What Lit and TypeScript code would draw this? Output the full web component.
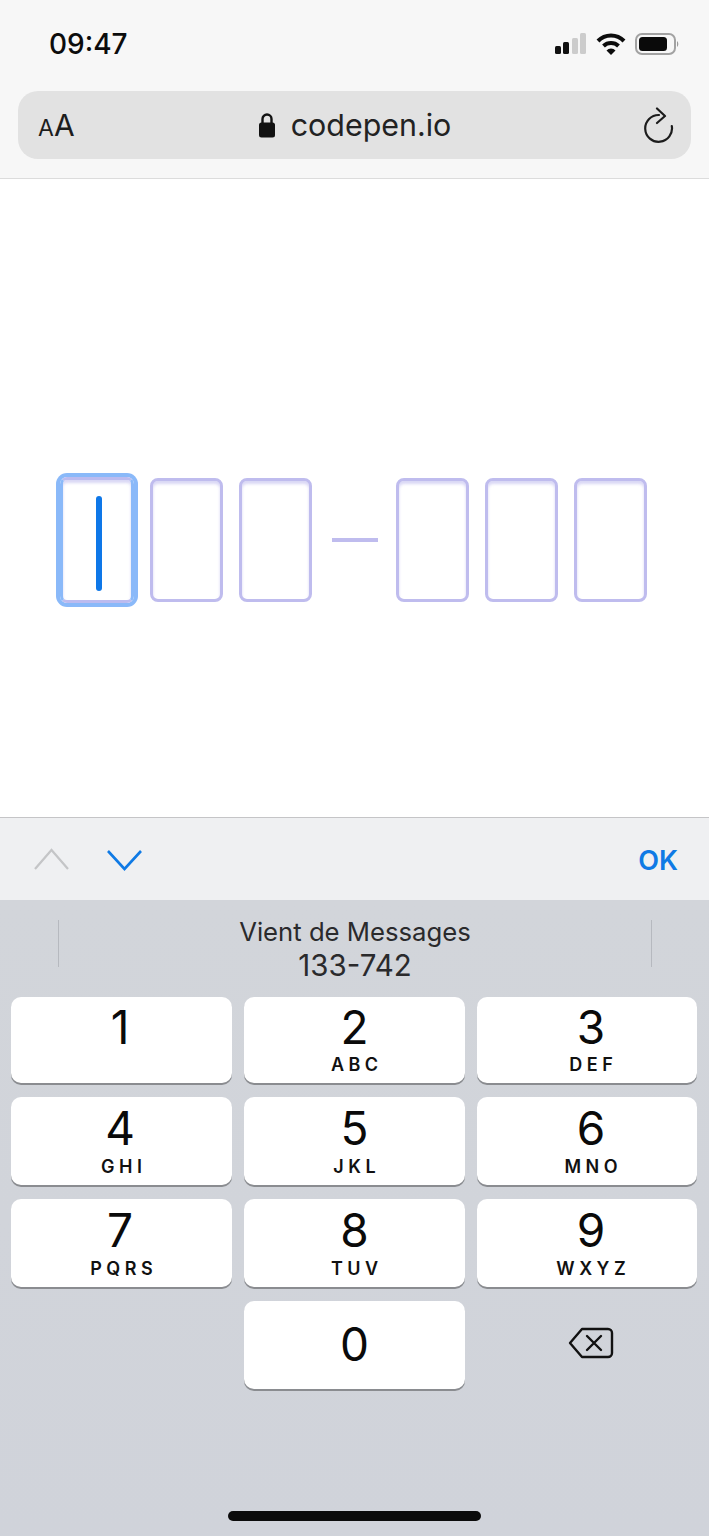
import { LitElement, html, css } from "lit";
import { customElement } from "lit/decorators.js";

const KEYS: [string, string][][] = [
  [["1", ""], ["2", "ABC"], ["3", "DEF"]],
  [["4", "GHI"], ["5", "JKL"], ["6", "MNO"]],
  [["7", "PQRS"], ["8", "TUV"], ["9", "WXYZ"]],
];

@customElement("app-root")
export class AppRoot extends LitElement {
  static styles = css`
    :host { display: block; width: 709px; height: 1536px; overflow: hidden; font-family: Inter, "Liberation Sans", sans-serif; color: #111; background: #fff; }
    .screen { display: flex; flex-direction: column; height: 1536px; }
    .chrome { height: 178px; flex: none; background: #f7f7f7; border-bottom: 1px solid #dcdcdc; padding: 0 18px; display: flex; flex-direction: column; }
    .status { height: 91px; display: flex; align-items: center; justify-content: space-between; padding: 0 11px 4px 31px; box-sizing: border-box; }
    .time { font-size: 28px; font-weight: 550; color: #0c0c0c; }
    .status-icons { display: flex; align-items: center; gap: 9px; }
    .url { height: 68px; background: #e2e2e2; border-radius: 20px; display: grid; grid-template-columns: 1fr auto 1fr; align-items: center; padding: 0 17px 0 20px; }
    .aa { font-size: 30px; color: #1d1d1d; line-height: 1; display: flex; align-items: baseline; }
    .aa small { font-size: 23px; }
    .site { display: flex; align-items: center; gap: 15px; font-size: 30.4px; color: #222; margin-left: -3px; }
    .reload { justify-self: end; display: flex; }
    .page { flex: 1; display: flex; align-items: center; padding: 84px 0 0 60px; background: #fff; box-sizing: border-box; }
    .otp { display: flex; align-items: center; }
    .box { flex: none; width: 73px; height: 124px; box-sizing: border-box; border: 3px solid #bfbcee; border-radius: 8px; margin-right: 16px; box-shadow: inset 0 3px 3px rgba(192, 189, 238, 0.6); }
    .box.focus { width: 74px; height: 126px; border-color: #bcbbef #8ab9f9; border-radius: 7px; display: flex; align-items: center; justify-content: center; padding: 6px 0 0 4px; box-shadow: 0 0 0 4px #8ab9f9, inset 0 3px 3px rgba(192, 189, 238, 0.6); }
    .caret { width: 6px; height: 95px; border-radius: 3px; background: #0e77e8; }
    .dash { width: 46px; height: 4px; background: #bfbcee; margin: 0 18px 0 4px; }
    .toolbar { height: 82px; flex: none; border-top: 1px solid #c5c5c7; background: #eff0f2; display: flex; align-items: center; padding: 0 31px 0 33px; gap: 36px; }
    .ok { margin-left: auto; padding-top: 2px; font-size: 27px; font-weight: 600; color: #0f7ae5; }
    .kbd { height: 636px; flex: none; box-sizing: border-box; background: linear-gradient(#d2d5da, #d0d3da); padding: 0 12px 0 11px; display: flex; flex-direction: column; position: relative; }
    .suggest { height: 97px; flex: none; display: flex; align-items: center; margin: 0 45px 0 47px; }
    .sep { width: 1px; height: 47px; background: #b6b9bf; margin-top: -10px; }
    .msg { flex: 1; text-align: center; font-size: 25.7px; line-height: 33px; color: #2a2a2c; }
    .msg .code { font-size: 29.500px; display: block; line-height: 34px; }
    .rows { display: flex; flex-direction: column; gap: 14px; }
    .row { display: grid; grid-template-columns: 221px 221px 220px; column-gap: 12px; }
    .key { height: 88px; box-sizing: border-box; background: #fff; border-radius: 10px; box-shadow: 0 2px 0 #8a8c90; display: flex; flex-direction: column; align-items: center; }
    .row.first .key { height: 86px; }
    .row.first .num { margin-top: 3px; }
    .row.first .let { margin-top: 1px; }
    .key.left .num { margin-right: 3px; }
    .key.right { padding-left: 8px; }
    .num { font-size: 46px; line-height: 54px; margin-top: 4px; color: #0a0a0a; }
    .num.zero { margin-top: 16px; }
    .let { font-size: 18px; line-height: 20px; font-weight: 600; letter-spacing: 4.5px; margin-right: -4.5px; margin-top: 2px; color: #111; }
    .blank { height: 88px; }
    .back { display: flex; align-items: center; justify-content: center; height: 84px; padding-left: 8px; }
    .home { position: absolute; left: 228px; bottom: 15px; width: 253px; height: 10px; border-radius: 5px; background: #0b0b0b; }
  `;

  private icons() {
    return html`
      <svg width="33" height="21" viewBox="0 0 33 21">
        <rect x="1" y="13" width="6" height="8" rx="1.5" fill="#111"/>
        <rect x="9" y="9" width="6" height="12" rx="1.5" fill="#111"/>
        <rect x="18" y="5" width="6" height="16" rx="1.500" fill="#ccc"/>
        <rect x="26" y="0" width="6" height="21" rx="1.500" fill="#ccc"/>
      </svg>
      <svg width="30" height="22" viewBox="0 0 30 22">
        <path d="M2 8 A18 18 0 0 1 28 8" fill="none" stroke="#0c0c0c" stroke-width="4"/>
        <path d="M7.500 13 A11 11 0 0 1 22.500 13" fill="none" stroke="#0c0c0c" stroke-width="4"/>
        <path d="M15 22 L10.500 17.500 A6 6 0 0 1 19.500 17.500 Z" fill="#0c0c0c"/>
      </svg>
      <svg width="45" height="22" viewBox="0 0 45 22">
        <rect x="1" y="1" width="39" height="20" rx="6" fill="none" stroke="#a2a2a2" stroke-width="2"/>
        <rect x="4" y="4" width="28" height="14" rx="3.5" fill="#0a0a0a"/>
        <path d="M42 8 a4 4 0 0 1 0 6 Z" fill="#9b9b9b"/>
      </svg>`;
  }

  render() {
    return html`
      <div class="screen">
        <div class="chrome">
          <div class="status">
            <span class="time">09:47</span>
            <span class="status-icons">${this.icons()}</span>
          </div>
          <div class="url">
            <span class="aa"><small>A</small>A</span>
            <span class="site">
              <svg width="18" height="26" viewBox="0 0 18 26">
                <path d="M4.500 11 V7 a4.500 4.500 0 0 1 9 0 V11" fill="none" stroke="#111" stroke-width="2.4"/>
                <rect x="1" y="10.500" width="16" height="15" rx="2.500" fill="#111"/>
              </svg>
              <span>codepen.io</span>
            </span>
            <span class="reload">
              <svg width="32" height="36" viewBox="0 0 32 36">
                <path d="M17 8 A13.400 13.400 0 1 0 29.800 19" fill="none" stroke="#1c1c1c" stroke-width="2.2" stroke-linecap="round"/>
                <path d="M15 1.500 L23 9 L15 16" fill="none" stroke="#1c1c1c" stroke-width="2.2" stroke-linecap="round" stroke-linejoin="round"/>
              </svg>
            </span>
          </div>
        </div>
        <div class="page">
          <div class="otp">
            <div class="box focus"><div class="caret"></div></div>
            <div class="box"></div>
            <div class="box"></div>
            <div class="dash"></div>
            <div class="box"></div>
            <div class="box"></div>
            <div class="box"></div>
          </div>
        </div>
        <div class="toolbar">
          <svg width="37" height="24" viewBox="0 0 37 24"><path d="M2 22 L18.500 3 L35 22" fill="none" stroke="#c4c5c7" stroke-width="2.2"/></svg>
          <svg width="37" height="24" viewBox="0 0 37 24"><path d="M2 4 L18.500 22 L35 4" fill="none" stroke="#0f7ae5" stroke-width="2.6"/></svg>
          <span class="ok">OK</span>
        </div>
        <div class="kbd">
          <div class="suggest">
            <div class="sep"></div>
            <div class="msg">Vient de Messages<span class="code">133-742</span></div>
            <div class="sep"></div>
          </div>
          <div class="rows">
            ${KEYS.map(
              (row, r) => html`<div class="row ${r === 0 ? "first" : ""}">
                ${row.map(([n, l], c) => html`<div class="key ${c === 0 ? "left" : c === 2 ? "right" : ""}"><span class="num">${n}</span><span class="let">${l}</span></div>`)}
              </div>`
            )}
            <div class="row">
              <div class="blank"></div>
              <div class="key"><span class="num zero">0</span></div>
              <div class="back">
                <svg width="46" height="34" viewBox="0 0 46 34">
                  <path d="M14 3 H40 a4 4 0 0 1 4 4 V27 a4 4 0 0 1 -4 4 H14 L2 17 Z" fill="none" stroke="#111" stroke-width="2.4" stroke-linejoin="round"/>
                  <path d="M19 10 L33 24 M33 10 L19 24" fill="none" stroke="#111" stroke-width="2.4" stroke-linecap="round"/>
                </svg>
              </div>
            </div>
          </div>
          <div class="home"></div>
        </div>
      </div>
    `;
  }
}
